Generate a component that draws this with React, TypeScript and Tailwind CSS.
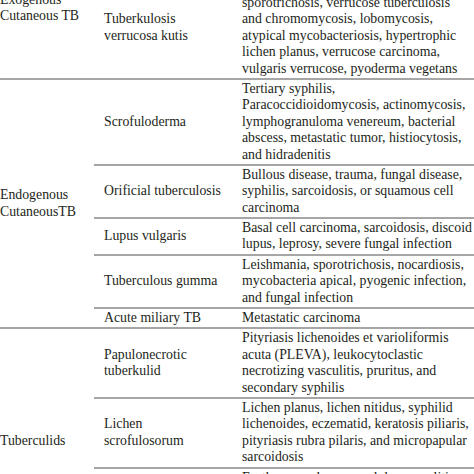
type Row = { name: string[]; text: string[] };
type Group = { label: string[]; lead?: boolean; rows: Row[] };

const groups: Group[] = [
  {
    label: ["Exogenous", "Cutaneous TB"],
    lead: true,
    rows: [
      {
        name: ["Tuberkulosis", "verrucosa kutis"],
        text: [
          "Lupus vulgaris, leishmaniasis, blastomycosis,",
          "sporotrichosis, verrucose tuberculosis",
          "and chromomycosis, lobomycosis,",
          "atypical mycobacteriosis, hypertrophic",
          "lichen planus, verrucose carcinoma,",
          "vulgaris verrucose, pyoderma vegetans",
        ],
      },
    ],
  },
  {
    label: ["Endogenous", "CutaneousTB"],
    rows: [
      {
        name: ["Scrofuloderma"],
        text: [
          "Tertiary syphilis,",
          "Paracoccidioidomycosis, actinomycosis,",
          "lymphogranuloma venereum, bacterial",
          "abscess, metastatic tumor, histiocytosis,",
          "and hidradenitis",
        ],
      },
      {
        name: ["Orificial tuberculosis"],
        text: [
          "Bullous disease, trauma, fungal disease,",
          "syphilis, sarcoidosis, or squamous cell",
          "carcinoma",
        ],
      },
      {
        name: ["Lupus vulgaris"],
        text: [
          "Basal cell carcinoma, sarcoidosis, discoid",
          "lupus, leprosy, severe fungal infection",
        ],
      },
      {
        name: ["Tuberculous gumma"],
        text: [
          "Leishmania, sporotrichosis, nocardiosis,",
          "mycobacteria apical, pyogenic infection,",
          "and fungal infection",
        ],
      },
      { name: ["Acute miliary TB"], text: ["Metastatic carcinoma"] },
    ],
  },
  {
    label: ["Tuberculids"],
    rows: [
      {
        name: ["Papulonecrotic", "tuberkulid"],
        text: [
          "Pityriasis lichenoides et varioliformis",
          "acuta (PLEVA), leukocytoclastic",
          "necrotizing vasculitis, pruritus, and",
          "secondary syphilis",
        ],
      },
      {
        name: ["Lichen", "scrofulosorum"],
        text: [
          "Lichen planus, lichen nitidus, syphilid",
          "lichenoides, eczematid, keratosis piliaris,",
          "pityriasis rubra pilaris, and micropapular",
          "sarcoidosis",
        ],
      },
      {
        name: ["Erythema", "induratum of", "Bazin"],
        text: [
          "Erythema nodosum, nodular vasculitis,",
          "polyarteritis nodosa, pancreatic",
          "panniculitis, lupus panniculitis,",
          "and cold panniculitis",
          "",
        ],
      },
    ],
  },
];

function Lines({ lines }: { lines: string[] }) {
  return (
    <>
      {lines.map((l, i) => (
        <div key={i} className="whitespace-nowrap h-[16.4px]">
          {l}
        </div>
      ))}
    </>
  );
}

export default function App() {
  return (
    <div className="w-[474px] h-[474px] overflow-hidden bg-white font-['Liberation_Serif',serif] text-[13.8px] leading-[16.4px] text-[#231f20]">
      <div className="mt-[-61px]">
        {groups.map((g, gi) => (
          <div
            key={gi}
            className={`flex ${gi > 0 ? "border-t-2 border-[#a6a6a6]" : ""}`}
          >
            <div className="w-[94px] shrink-0 flex flex-col justify-center">
              <Lines lines={g.label} />
            </div>
            <div className="flex-1 flex flex-col">
              {g.lead && <div className="h-[36.6px]" />}
              {g.rows.map((r, ri) => (
                <div
                  key={ri}
                  className={`flex py-px ${ri > 0 || g.lead ? "border-t-2 border-[#a6a6a6]" : ""}`}
                >
                  <div className="w-[143px] shrink-0 pl-[10px] flex flex-col justify-center">
                    <Lines lines={r.name} />
                  </div>
                  <div className="flex-1 pl-[5px]">
                    <Lines lines={r.text} />
                  </div>
                </div>
              ))}
            </div>
          </div>
        ))}
      </div>
    </div>
  );
}
